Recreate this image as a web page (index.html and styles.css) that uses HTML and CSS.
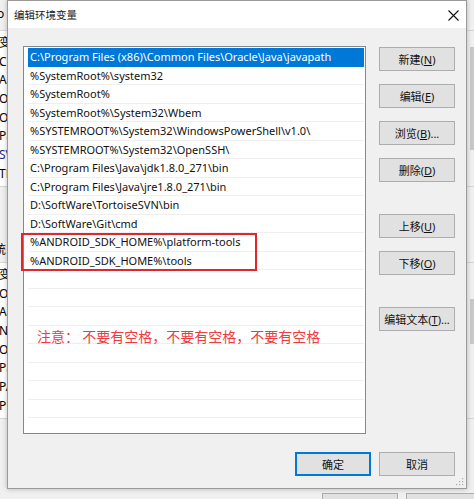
FILE: index.html
```html
<!DOCTYPE html>
<html lang="zh-CN">
<head>
<meta charset="utf-8">
<title>编辑环境变量</title>
<link rel="stylesheet" href="styles.css">
</head>
<body>
<div class="desk">
  <div class="bgwin">
    <div class="bg-main">
      <div class="bg-left">
        <div class="bg-gray bg-top"><span class="frag">o</span></div>
        <div class="bg-list">
          <div class="bg-row">变量</div>
          <div class="bg-row">CLASSPATH</div>
          <div class="bg-row">ANDROID_SDK_HOME</div>
          <div class="bg-row">OneDrive</div>
          <div class="bg-row">OneDriveConsumer</div>
          <div class="bg-row">Path</div>
          <div class="bg-row sel">SVN</div>
          <div class="bg-row">TEMP</div>
        </div>
        <div class="bg-gray bg-mid"><span class="frag">统</span></div>
        <div class="bg-list">
          <div class="bg-row">变量</div>
          <div class="bg-row">OneDrive</div>
          <div class="bg-row">ANDROID</div>
          <div class="bg-row">NUMBER_OF_PROCESSORS</div>
          <div class="bg-row">OS</div>
          <div class="bg-row">Path</div>
          <div class="bg-row">PATHEXT</div>
          <div class="bg-row">PROCESSOR</div>
        </div>
        <div class="bg-gray bg-fill"></div>
      </div>
      <div class="bg-center"></div>
      <div class="bg-right">
        <div class="bg-gray bg-top"></div>
        <div class="bg-track t1"><div class="bg-thumb th1"></div></div>
        <div class="bg-gray bg-mid2"></div>
        <div class="bg-track t2"><div class="bg-thumb th2"></div></div>
        <div class="bg-gray bg-fill"></div>
      </div>
    </div>
    <div class="bg-bottom">
      <div class="bg-btn"></div>
      <div class="bg-btn"></div>
    </div>
  </div>

  <div class="dialog">
    <div class="titlebar">
      <span class="title">编辑环境变量</span>
      <svg class="close" width="11" height="11" viewBox="0 0 11 11"><path d="M0.5 0.5 L10.5 10.5 M10.5 0.5 L0.5 10.5" stroke="#111" stroke-width="1.1" fill="none"/></svg>
    </div>
    <div class="body">
      <div class="main">
        <div class="listbox">
          <div class="rows">
            <div class="row selected">C:\Program Files (x86)\Common Files\Oracle\Java\javapath</div>
            <div class="row">%SystemRoot%\system32</div>
            <div class="row">%SystemRoot%</div>
            <div class="row">%SystemRoot%\System32\Wbem</div>
            <div class="row">%SYSTEMROOT%\System32\WindowsPowerShell\v1.0\</div>
            <div class="row">%SYSTEMROOT%\System32\OpenSSH\</div>
            <div class="row">C:\Program Files\Java\jdk1.8.0_271\bin</div>
            <div class="row">C:\Program Files\Java\jre1.8.0_271\bin</div>
            <div class="row">D:\SoftWare\TortoiseSVN\bin</div>
            <div class="row">D:\SoftWare\Git\cmd</div>
            <div class="row">%ANDROID_SDK_HOME%\platform-tools</div>
            <div class="row">%ANDROID_SDK_HOME%\tools</div>
            <div class="row"></div>
            <div class="row"></div>
            <div class="row"></div>
            <div class="row"></div>
            <div class="row"></div>
            <div class="row"></div>
            <div class="row"></div>
            <div class="row"></div>
            <div class="row"></div>
            <div class="row"></div>
          </div>
        </div>
        <div class="side">
          <div class="group">
            <button class="btn">新建(<u>N</u>)</button>
            <button class="btn">编辑(<u>E</u>)</button>
            <button class="btn">浏览(<u>B</u>)...</button>
            <button class="btn">删除(<u>D</u>)</button>
          </div>
          <div class="group">
            <button class="btn">上移(<u>U</u>)</button>
            <button class="btn">下移(<u>O</u>)</button>
          </div>
          <div class="group">
            <button class="btn">编辑文本(<u>T</u>)...</button>
          </div>
        </div>
      </div>
      <div class="footer">
        <button class="btn default">确定</button>
        <button class="btn">取消</button>
      </div>
    </div>
    <svg class="grip" width="8" height="8" viewBox="0 0 8 8">
      <rect x="6" y="0" width="1.2" height="1.2" fill="#aaa"/>
      <rect x="3" y="3" width="1.2" height="1.2" fill="#aaa"/>
      <rect x="6" y="3" width="1.2" height="1.2" fill="#aaa"/>
      <rect x="0" y="6" width="1.2" height="1.2" fill="#aaa"/>
      <rect x="3" y="6" width="1.2" height="1.2" fill="#aaa"/>
      <rect x="6" y="6" width="1.2" height="1.2" fill="#aaa"/>
    </svg>
  </div>

  <div class="mark"></div>
  <div class="note">注意： 不要有空格，不要有空格，不要有空格</div>
</div>
</body>
</html>
```

FILE: styles.css
```css
* { box-sizing: border-box; }
html, body {
  margin: 0;
  padding: 0;
}
body {
  width: 474px;
  height: 499px;
  overflow: hidden;
  font-family: "Noto Sans", "Noto Sans CJK SC", sans-serif;
  font-size: 11px;
  color: #000;
  background: #f0f0f0;
}
.desk {
  position: relative;
  width: 474px;
  height: 499px;
  overflow: hidden;
}

/* background window */
.bgwin {
  display: flex;
  flex-direction: column;
  height: 499px;
}
.bg-main {
  display: flex;
  height: 489px;
}
.bg-left {
  width: 8px;
  overflow: hidden;
  display: flex;
  flex-direction: column;
}
.bg-center { flex: 1; }
.bg-right {
  width: 8px;
  display: flex;
  flex-direction: column;
}
.bg-gray { background: #f0f0f0; }
.bg-top { height: 30px; position: relative; }
.bg-left .bg-top { padding-top: 6px; }
.frag { display: block; margin-left: -3px; font-size: 12px; line-height: 16px; white-space: nowrap; }
.bg-list {
  background: #fff;
  border-top: 1px solid #d5d5d5;
  border-bottom: 1px solid #d5d5d5;
  height: 157px;
  padding-top: 3px;
}
.bg-row {
  height: 18.7px;
  line-height: 18.7px;
  font-size: 12px;
  white-space: nowrap;
  margin-left: -1px;
}
.bg-row.sel { color: #1a2a8a; }
.bg-mid { height: 75px; padding-top: 55px; }
.bg-mid .frag { margin-left: -6px; }
.bg-fill { flex: 1; }
.bg-track {
  background: #f0f0f0;
  border-top: 1px solid #d5d5d5;
  border-bottom: 1px solid #d5d5d5;
  height: 157px;
  display: flex;
  justify-content: flex-end;
}
.bg-thumb { width: 4px; background: #c8c8c8; }
.th1 { margin-top: 16px; height: 103px; }
.th2 { margin-top: 36px; height: 45px; }
.bg-mid2 { height: 75px; }
.bg-bottom {
  height: 10px;
  display: flex;
  gap: 8px;
  padding: 4px 0 0 322px;
  background: #f0f0f0;
}
.bg-btn {
  width: 76px;
  height: 20px;
  background: #e1e1e1;
  border: 1px solid #adadad;
  flex: none;
}

/* dialog */
.dialog {
  position: absolute;
  left: 7px;
  top: 0;
  width: 460px;
  height: 489px;
  background: #f0f0f0;
  border: 1px solid #9a9a9a;
  box-shadow: 0 0 5px rgba(0, 0, 0, 0.25);
  display: flex;
  flex-direction: column;
}
.titlebar {
  height: 27px;
  background: #fff;
  display: flex;
  align-items: center;
  justify-content: space-between;
  padding: 0 7px 0 6px;
  flex: none;
}
.title {
  font-size: 10.5px;
  color: #222;
}
.close { display: block; margin-top: 1px; }
.body {
  flex: 1;
  padding: 18px 11px 0 15px;
  display: flex;
  flex-direction: column;
}
.main {
  display: flex;
  gap: 13px;
}
.listbox {
  width: 344px;
  height: 388px;
  background: #fff;
  border: 1px solid #828790;
  overflow: hidden;
  padding: 1px 1px 0 4px;
}
.row {
  height: 18.5px;
  line-height: 18px;
  border-bottom: 1px solid #efefef;
  padding-left: 2px;
  white-space: nowrap;
  overflow: hidden;
  color: #111;
}
.row.selected {
  background: #0078d7;
  color: #fff;
  border-bottom-color: #0078d7;
}
.side {
  width: 76px;
  display: flex;
  flex-direction: column;
  gap: 32px;
  padding-top: 1px;
}
.group {
  display: flex;
  flex-direction: column;
  gap: 13px;
}
.btn {
  width: 76px;
  height: 24px;
  background: #e1e1e1;
  border: 1px solid #adadad;
  font-family: "Noto Sans", "Noto Sans CJK SC", sans-serif;
  font-size: 11px;
  color: #111;
  padding: 0;
  margin: 0;
  display: flex;
  align-items: center;
  justify-content: center;
}
.btn u { text-underline-offset: 1px; }
.btn.default {
  border: 2px solid #0078d7;
}
.footer {
  display: flex;
  justify-content: flex-end;
  gap: 8px;
  padding-top: 18px;
}
.grip {
  position: absolute;
  right: 2px;
  bottom: 2px;
}

/* annotations */
.mark {
  position: absolute;
  left: 21px;
  top: 233px;
  width: 236px;
  height: 38px;
  border: 2px solid #e3262c;
}
.note {
  position: absolute;
  left: 37px;
  top: 327px;
  font-family: "Noto Sans CJK SC", sans-serif;
  font-size: 14px;
  line-height: 18px;
  color: #ef3a40;
  white-space: nowrap;
}
```
